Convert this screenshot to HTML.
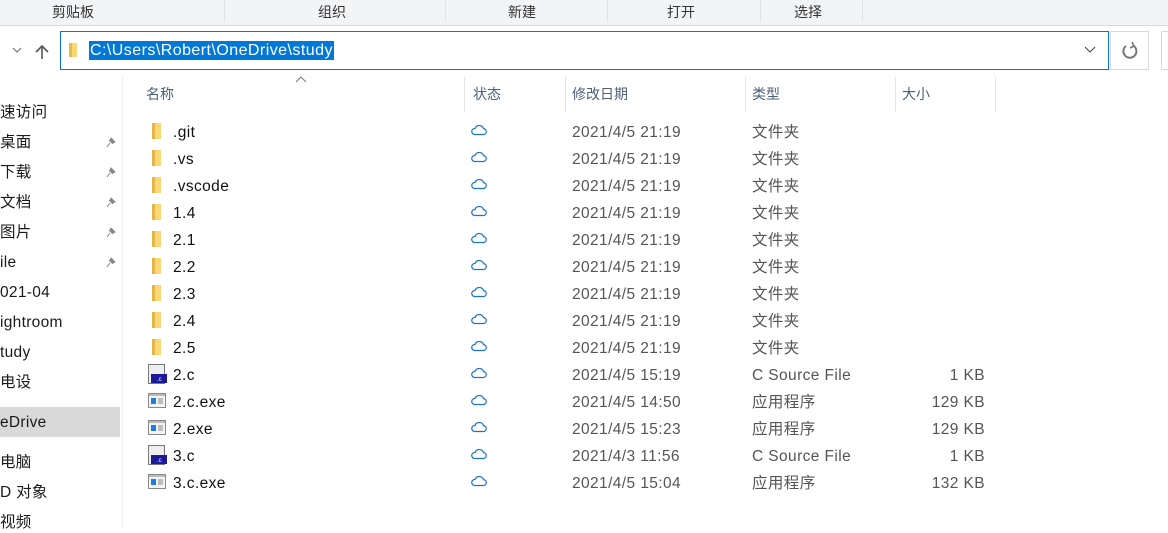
<!DOCTYPE html>
<html><head><meta charset="utf-8"><style>
*{margin:0;padding:0;box-sizing:border-box}
body{width:1168px;height:528px;overflow:hidden;background:#fff;font-family:"Liberation Sans","Noto Sans CJK SC",sans-serif;font-size:15px;color:#1a1a1a;position:relative}
.a{position:absolute;white-space:nowrap;line-height:20px}
.rib{left:0;top:0;width:1168px;height:26px;background:#f3f4f6;border-bottom:1px solid #dadbdc}
.rib span{position:absolute;top:2px;font-size:14px;color:#333;line-height:20px}
.rs{position:absolute;top:0;width:1px;height:22px;background:#e2e3e5}
.addr{left:60px;top:31px;width:1049px;height:39px;border:1px solid #0b76cf}
.sel{position:absolute;left:28px;top:9px;background:#0078d7;color:#fff;font-size:16px;letter-spacing:0.45px;line-height:19px;padding:0 1px}
.side{left:0;font-size:15.5px;letter-spacing:0.3px;color:#1a1a1a}
.hdr{top:77px;height:35px;width:1px;background:#e5e5e5}
.hd{top:84px;color:#4c607a;font-size:14px}
.row{font-size:15.5px;letter-spacing:0.4px;color:#111}
.g{color:#555}
.pin{position:absolute;left:104px;width:12px;height:12px}
</style></head><body>
<div class="a rib">
<span style="left:52px">剪贴板</span><span style="left:318px">组织</span><span style="left:508px">新建</span><span style="left:667px">打开</span><span style="left:794px">选择</span>
<div class="rs" style="left:224px"></div><div class="rs" style="left:445px"></div><div class="rs" style="left:607px"></div><div class="rs" style="left:760px"></div><div class="rs" style="left:862px"></div>
</div>
<svg class="a" style="left:12px;top:46px" width="10" height="8"><path d="M1 2 L5 6 L9 2" stroke="#777" fill="none" stroke-width="1.2"/></svg>
<svg class="a" style="left:35px;top:44px" width="14" height="16"><path d="M7 15 V2 M1 8 L7 2 L13 8" stroke="#555" fill="none" stroke-width="1.6"/></svg>
<div class="a addr">
<svg class="a" style="left:7px;top:10px" width="12" height="16"><rect x="1" y="1" width="8" height="14" fill="#f8d775"/><rect x="1" y="1" width="3" height="14" fill="#e7b84a"/></svg>
<span class="sel">C:\Users\Robert\OneDrive\study</span>
<svg class="a" style="left:1023px;top:14px" width="12" height="8"><path d="M1 1 L6 6 L11 1" stroke="#444" fill="none" stroke-width="1"/></svg>
</div>
<div class="a" style="left:1110px;top:31px;width:39px;height:39px;border:1px solid #d9d9d9"></div>
<svg class="a" style="left:1120px;top:41px" width="20" height="20"><path d="M6 5 A6.5 6.5 0 1 0 13 4.5" stroke="#777" fill="none" stroke-width="2"/><path d="M12 1 L14 5 L10 7" stroke="#777" fill="none" stroke-width="1.6"/></svg>
<div class="a" style="left:1161px;top:31px;width:10px;height:39px;border:1px solid #d9d9d9"></div>
<svg class="a" style="left:295px;top:76px" width="12" height="7"><path d="M1 6 L6 1 L11 6" stroke="#777" fill="none"/></svg>
<div class="a" style="left:122px;top:76px;width:1px;height:452px;background:#f0f0f0"></div>
<div class="a" style="left:0;top:407px;width:120px;height:30px;background:#d9d9d9"></div>
<div class="a side" style="top:103px">速访问</div>
<div class="a side" style="top:133px">桌面</div>
<div class="a side" style="top:163px">下载</div>
<div class="a side" style="top:193px">文档</div>
<div class="a side" style="top:223px">图片</div>
<div class="a side" style="top:253px">ile</div>
<div class="a side" style="top:283px">021-04</div>
<div class="a side" style="top:313px">ightroom</div>
<div class="a side" style="top:343px">tudy</div>
<div class="a side" style="top:373px">电设</div>
<div class="a side" style="top:413px">eDrive</div>
<div class="a side" style="top:453px">电脑</div>
<div class="a side" style="top:483px">D 对象</div>
<div class="a side" style="top:513px">视频</div>
<svg class="pin" style="top:136px"><path d="M3 11 L6 7 M5 4 L9 8 M7 2 L11 6 L8 7 L6 5 Z" stroke="#888" fill="#888"/></svg>
<svg class="pin" style="top:166px"><path d="M3 11 L6 7 M5 4 L9 8 M7 2 L11 6 L8 7 L6 5 Z" stroke="#888" fill="#888"/></svg>
<svg class="pin" style="top:196px"><path d="M3 11 L6 7 M5 4 L9 8 M7 2 L11 6 L8 7 L6 5 Z" stroke="#888" fill="#888"/></svg>
<svg class="pin" style="top:226px"><path d="M3 11 L6 7 M5 4 L9 8 M7 2 L11 6 L8 7 L6 5 Z" stroke="#888" fill="#888"/></svg>
<svg class="pin" style="top:256px"><path d="M3 11 L6 7 M5 4 L9 8 M7 2 L11 6 L8 7 L6 5 Z" stroke="#888" fill="#888"/></svg>
<div class="a hdr" style="left:464px"></div><div class="a hdr" style="left:565px"></div><div class="a hdr" style="left:745px"></div><div class="a hdr" style="left:895px"></div><div class="a hdr" style="left:995px"></div>
<div class="a hd" style="left:146px">名称</div><div class="a hd" style="left:473px">状态</div><div class="a hd" style="left:572px">修改日期</div><div class="a hd" style="left:752px">类型</div><div class="a hd" style="left:902px">大小</div>
<div id="rows"></div>
<script>
var R=[["f",".git","2021/4/5 21:19","文件夹",""],["f",".vs","2021/4/5 21:19","文件夹",""],["f",".vscode","2021/4/5 21:19","文件夹",""],["f","1.4","2021/4/5 21:19","文件夹",""],["f","2.1","2021/4/5 21:19","文件夹",""],["f","2.2","2021/4/5 21:19","文件夹",""],["f","2.3","2021/4/5 21:19","文件夹",""],["f","2.4","2021/4/5 21:19","文件夹",""],["f","2.5","2021/4/5 21:19","文件夹",""],["c","2.c","2021/4/5 15:19","C Source File","1 KB"],["e","2.c.exe","2021/4/5 14:50","应用程序","129 KB"],["e","2.exe","2021/4/5 15:23","应用程序","129 KB"],["c","3.c","2021/4/3 11:56","C Source File","1 KB"],["e","3.c.exe","2021/4/5 15:04","应用程序","132 KB"]];
var h="";
R.forEach(function(r,i){var y=121+i*27;var t=y+2;
var ic=r[0]=="f"?'<svg class="a" style="left:150px;top:'+(y+1)+'px" width="14" height="18"><rect x="2" y="1" width="9" height="16" fill="#f8d775"/><rect x="2" y="1" width="3" height="16" fill="#e5b446"/></svg>':
r[0]=="c"?'<svg class="a" style="left:148px;top:'+(y)+'px" width="20" height="20"><rect x="0.5" y="0.5" width="16" height="19" fill="#eee" stroke="#777"/><rect x="3" y="10" width="16" height="9" fill="#1a1a9a"/><text x="9" y="17" font-size="6" fill="#fff" font-family="Liberation Sans">.c</text></svg>':
'<svg class="a" style="left:148px;top:'+(y+2)+'px" width="18" height="16"><rect x="0.5" y="0.5" width="17" height="14" fill="#f4f4f4" stroke="#888"/><rect x="1" y="1" width="16" height="2" fill="#bbb"/><rect x="3" y="5" width="5" height="6" fill="#1a7fe0"/><path d="M10 6h5M10 8h5M10 10h5" stroke="#888"/></svg>';
h+=ic+'<div class="a row" style="left:173px;top:'+t+'px">'+r[1]+'</div>';
h+='<svg class="a" style="left:470px;top:'+(y+3)+'px" width="18" height="12"><path d="M4.5 10.5 H14 A3 3 0 0 0 13.5 4.6 A4.5 4.5 0 0 0 5 4.5 A3 3 0 0 0 4.5 10.5 Z" stroke="#1a73d0" fill="none" stroke-width="1.2"/></svg>';
h+='<div class="a row g" style="left:572px;top:'+t+'px">'+r[2]+'</div><div class="a row g" style="left:752px;top:'+t+'px">'+r[3]+'</div><div class="a row g" style="right:183px;top:'+t+'px">'+r[4]+'</div>';});
document.getElementById("rows").innerHTML=h;
</script>
</body></html>
